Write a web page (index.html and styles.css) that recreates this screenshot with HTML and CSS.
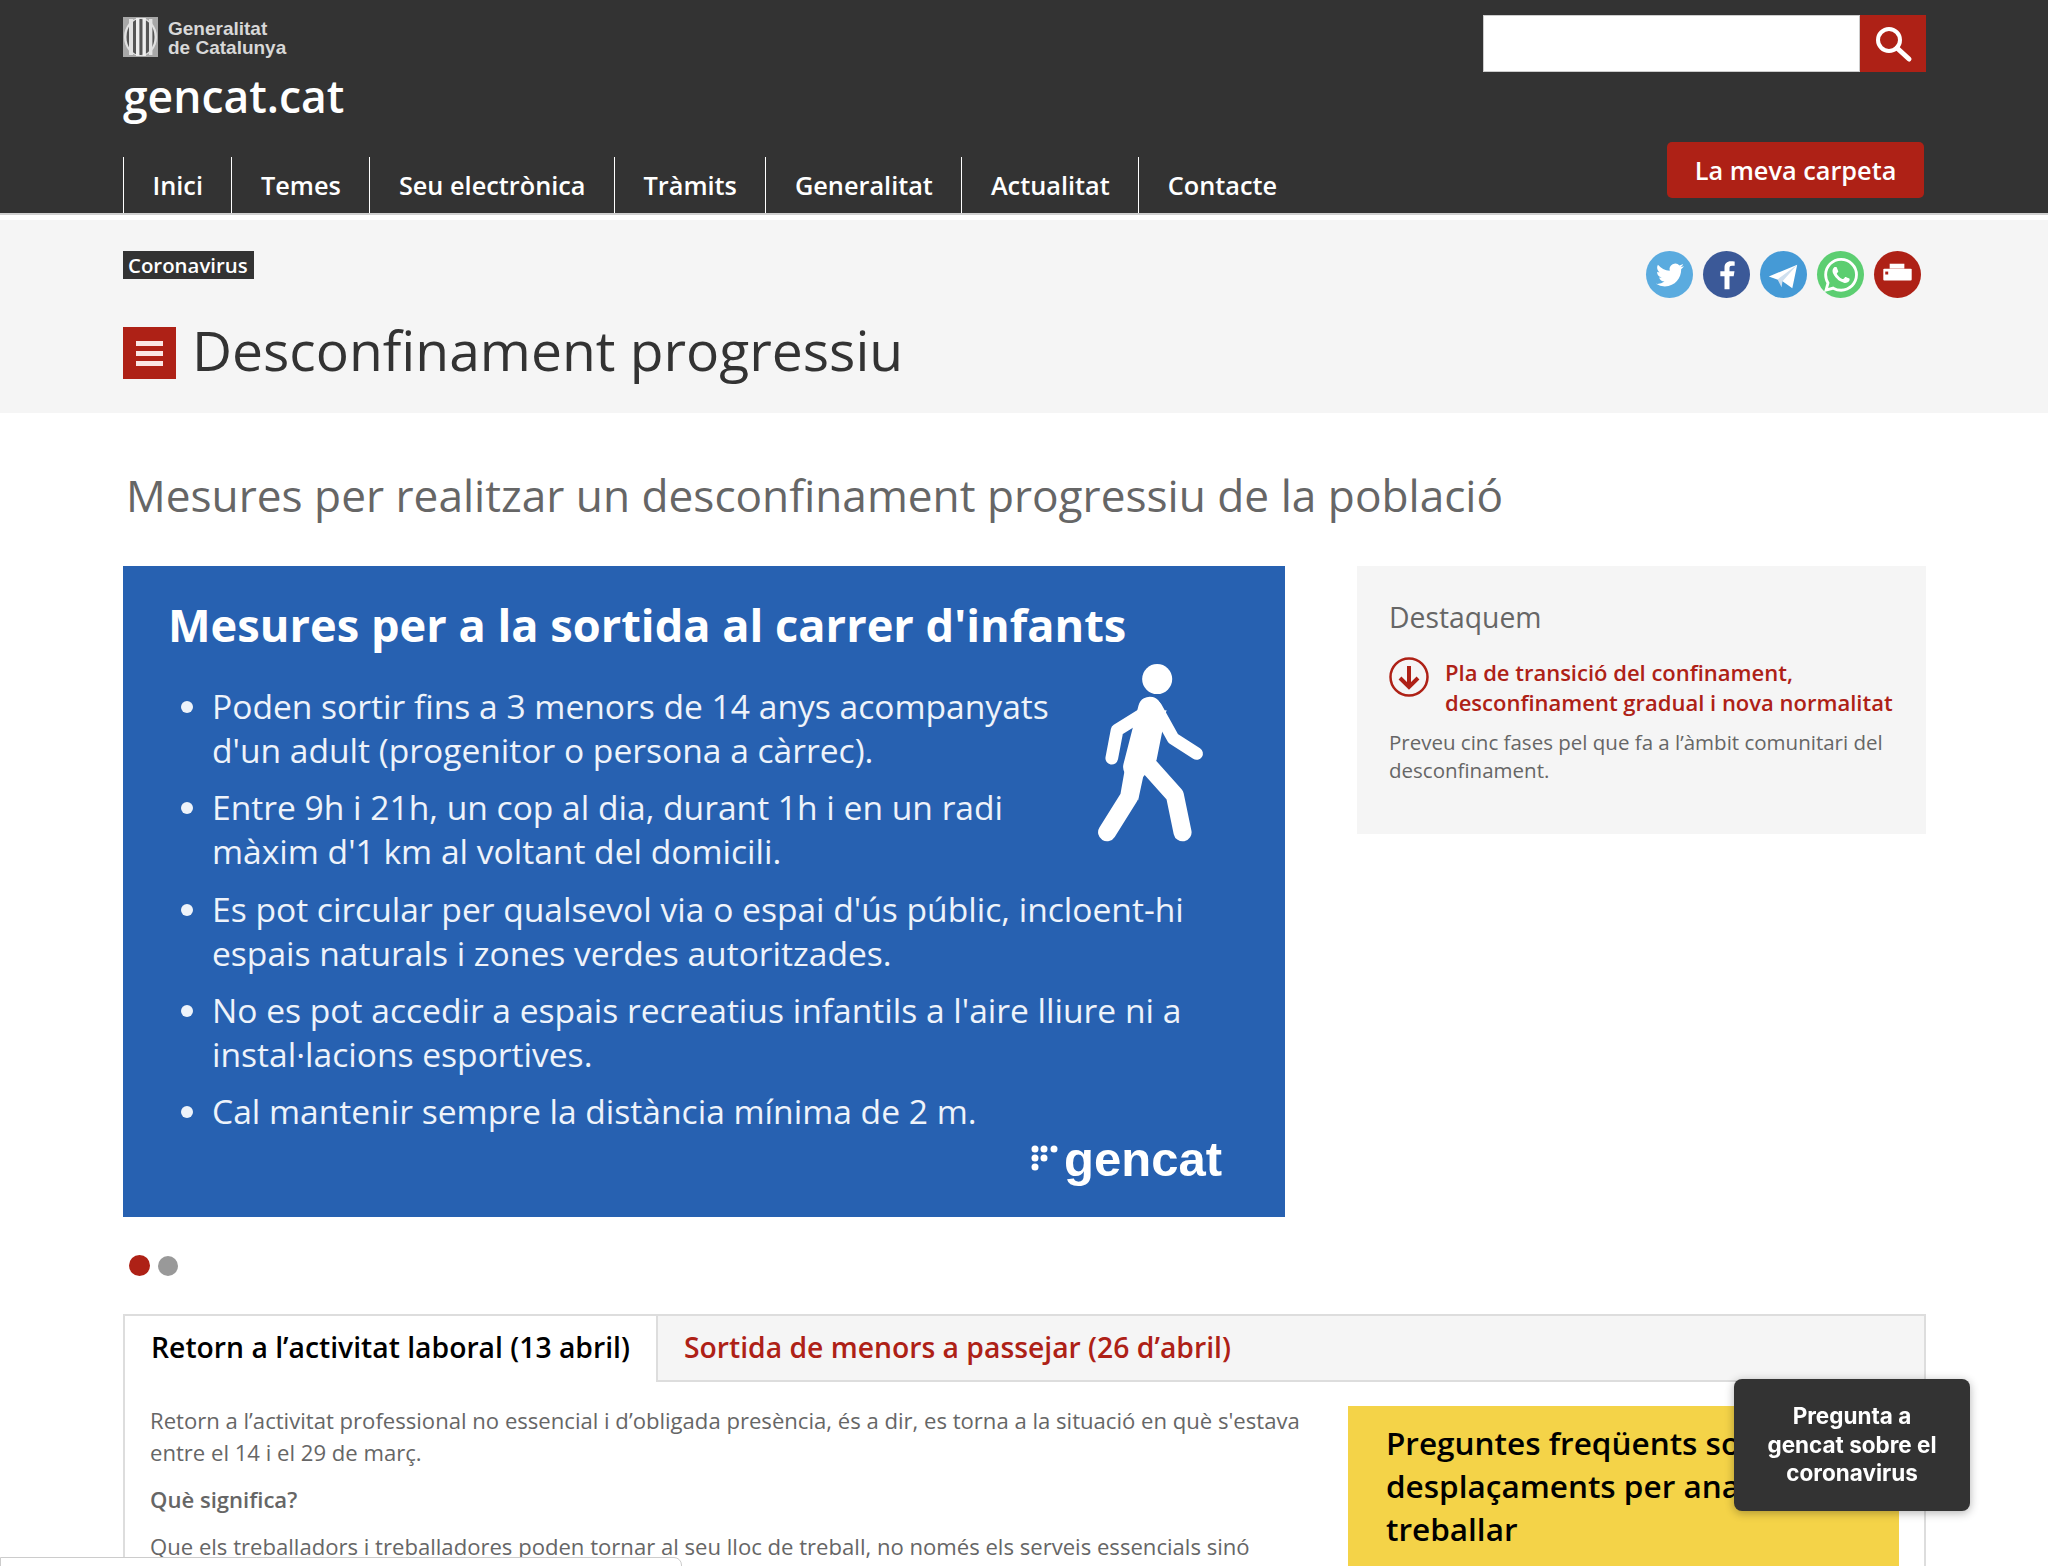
FILE: index.html
```html
<!DOCTYPE html>
<html lang="ca">

<head>
    <meta charset="UTF-8">
    <meta name="viewport" content="width=device-width, initial-scale=1.0">
    <title>Desconfinament progressiu</title>
    <link rel="stylesheet" href="styles.css">
</head>

<body>
    <div class="page">
        <header class="site-header">
            <div class="header-left">
                <div class="brand">
                    <svg class="brand-logo" viewBox="0 0 35 40">
                        <rect width="35" height="40" fill="#a8a8a8"/>
                        <ellipse cx="17.5" cy="20" rx="16.5" ry="19" fill="#e2e2e2"/>
                        <ellipse cx="17.5" cy="20" rx="14" ry="18" fill="#555"/>
                        <rect x="6" y="2" width="4" height="36" fill="#e2e2e2"/>
                        <rect x="13" y="1" width="3.4" height="38" fill="#eee"/>
                        <rect x="19.5" y="1" width="3.4" height="38" fill="#eee"/>
                        <rect x="26" y="2" width="3.4" height="36" fill="#e2e2e2"/>
                    </svg>
                    <div class="brand-name">Generalitat<br>de Catalunya</div>
                </div>
                <div class="site-name">gencat.cat</div>
                <nav class="main-nav">
                    <a href="#">Inici</a>
                    <a href="#">Temes</a>
                    <a href="#">Seu electrònica</a>
                    <a href="#">Tràmits</a>
                    <a href="#">Generalitat</a>
                    <a href="#">Actualitat</a>
                    <a href="#">Contacte</a>
                </nav>
            </div>
            <div class="header-right">
                <form class="search">
                    <input type="text" class="search-input">
                    <button type="button" class="search-button">
                        <svg viewBox="0 0 40 40" width="40" height="40">
                            <circle cx="16" cy="16" r="11" fill="none" stroke="#fff" stroke-width="4"/>
                            <path d="M24 24 L36 35" stroke="#fff" stroke-width="5" stroke-linecap="round"/>
                        </svg>
                    </button>
                </form>
                <a href="#" class="folder-button">La meva carpeta</a>
            </div>
        </header>

        <section class="title-band">
            <div class="title-left">
                <span class="tag">Coronavirus</span>
                <div class="title-row">
                    <span class="menu-icon"><i></i><i></i><i></i></span>
                    <h1>Desconfinament progressiu</h1>
                </div>
            </div>
            <div class="share">
                <a href="#" class="share-icon twitter">
                    <svg viewBox="0 0 24 24" width="28" height="28"><path fill="#fff" d="M23.953 4.57a10 10 0 01-2.825.775 4.958 4.958 0 002.163-2.723c-.951.555-2.005.959-3.127 1.184a4.92 4.92 0 00-8.384 4.482C7.69 8.095 4.067 6.13 1.64 3.162a4.822 4.822 0 00-.666 2.475c0 1.71.87 3.213 2.188 4.096a4.904 4.904 0 01-2.228-.616v.06a4.923 4.923 0 003.946 4.827 4.996 4.996 0 01-2.212.085 4.936 4.936 0 004.604 3.417 9.867 9.867 0 01-6.102 2.105c-.39 0-.779-.023-1.17-.067a13.995 13.995 0 007.557 2.209c9.053 0 13.998-7.496 13.998-13.985 0-.21 0-.42-.015-.63A9.935 9.935 0 0024 4.59z"/></svg>
                </a>
                <a href="#" class="share-icon facebook">
                    <svg viewBox="0 0 48 48" width="40" height="40"><path fill="#fff" d="M27 41V25.5h5l1-6h-6v-3.500c0-2 .7-3 3-3h3.200V7.800c-1-.1-2.700-.3-4.700-.3-4.500 0-7.500 2.700-7.500 7.500v4.500h-5v6h5V41z"/></svg>
                </a>
                <a href="#" class="share-icon telegram">
                    <svg viewBox="0 0 48 48" width="47" height="47">
                        <path fill="#fff" d="M9 26 L38 14 L33 38 L23 31 Z"/>
                        <path fill="#cfe0ef" d="M18 29 L38 14 L23 31 L22 37 Z"/>
                    </svg>
                </a>
                <a href="#" class="share-icon whatsapp">
                    <svg viewBox="0 0 24 24" width="34" height="34"><path fill="#fff" d="M17.472 14.382c-.297-.149-1.758-.867-2.03-.967-.273-.099-.471-.148-.67.15-.197.297-.767.966-.94 1.164-.173.199-.347.223-.644.075-.297-.15-1.255-.463-2.39-1.475-.883-.788-1.48-1.761-1.653-2.059-.173-.297-.018-.458.13-.606.134-.133.298-.347.446-.52.149-.174.198-.298.298-.497.099-.198.05-.371-.025-.52-.075-.149-.669-1.612-.916-2.207-.242-.579-.487-.5-.669-.51-.173-.008-.371-.01-.57-.01-.198 0-.52.074-.792.372-.272.297-1.04 1.016-1.04 2.479 0 1.462 1.065 2.875 1.213 3.074.149.198 2.096 3.2 5.077 4.487.709.306 1.262.489 1.694.625.712.227 1.36.195 1.871.118.571-.085 1.758-.719 2.006-1.413.248-.694.248-1.289.173-1.413-.074-.124-.272-.198-.57-.347m-5.421 7.403h-.004a9.87 9.87 0 01-5.031-1.378l-.361-.214-3.741.982.998-3.648-.235-.374a9.86 9.86 0 01-1.51-5.26c.001-5.45 4.436-9.884 9.888-9.884 2.64 0 5.122 1.03 6.988 2.898a9.825 9.825 0 012.893 6.994c-.003 5.45-4.437 9.884-9.885 9.884m8.413-18.297A11.815 11.815 0 0012.05 0C5.495 0 .16 5.335.157 11.892c0 2.096.547 4.142 1.588 5.945L.057 24l6.305-1.654a11.882 11.882 0 005.683 1.448h.005c6.554 0 11.89-5.335 11.893-11.893a11.821 11.821 0 00-3.48-8.413z"/></svg>
                </a>
                <a href="#" class="share-icon print">
                    <svg viewBox="0 0 48 48" width="47" height="47">
                        <rect x="16" y="13" width="15" height="5" fill="#fff"/>
                        <rect x="9.500" y="18" width="29" height="12" rx="1" fill="#fff"/>
                        <rect x="11.500" y="21" width="3" height="3" fill="#ae2116"/>
                    </svg>
                </a>
            </div>
        </section>

        <main class="content">
            <h2 class="page-lead">Mesures per realitzar un desconfinament progressiu de la població</h2>

            <div class="intro">
                <div class="hero">
                    <h3>Mesures per a la sortida al carrer d'infants</h3>
                    <ul>
                        <li>Poden sortir fins a 3 menors de 14 anys acompanyats<br>d'un adult (progenitor o persona a càrrec).</li>
                        <li>Entre 9h i 21h, un cop al dia, durant 1h i en un radi<br>màxim d'1 km al voltant del domicili.</li>
                        <li>Es pot circular per qualsevol via o espai d'ús públic, incloent-hi<br>espais naturals i zones verdes autoritzades.</li>
                        <li>No es pot accedir a espais recreatius infantils a l'aire lliure ni a<br>instal<span class="middot">·</span>lacions esportives.</li>
                        <li>Cal mantenir sempre la distància mínima de 2 m.</li>
                    </ul>
                    <svg class="walker" viewBox="280 120 350 560">
                        <circle cx="472" cy="177" r="45" fill="#fff"/>
                        <path d="M452 268 L352 330 L336 414" fill="none" stroke="#fff" stroke-width="38" stroke-linecap="round" stroke-linejoin="round"/>
                        <path d="M468 262 L520 355 L590 400" fill="none" stroke="#fff" stroke-width="38" stroke-linecap="round" stroke-linejoin="round"/>
                        <path d="M405 300 L500 270 L470 420 L430 470 L415 540 L375 500 Z" fill="#fff"/>
                        <path d="M450 265 L405 440" fill="none" stroke="#fff" stroke-width="70" stroke-linecap="round"/>
                        <path d="M402 450 L388 530 L322 636" fill="none" stroke="#fff" stroke-width="54" stroke-linecap="round" stroke-linejoin="round"/>
                        <path d="M440 430 L525 525 L548 636" fill="none" stroke="#fff" stroke-width="54" stroke-linecap="round" stroke-linejoin="round"/>
                    </svg>
                    <div class="hero-logo">
                        <svg viewBox="0 0 30 30" width="30" height="30">
                            <g fill="#fff">
                                <circle cx="4" cy="5" r="3.500"/><circle cx="13" cy="5" r="3.500"/><circle cx="23" cy="5" r="3.500"/>
                                <circle cx="4" cy="14" r="3.500"/><circle cx="13" cy="14" r="3.500"/>
                                <circle cx="4" cy="23" r="3.500"/>
                            </g>
                        </svg>
                        <span>gencat</span>
                    </div>
                </div>
                <aside class="highlight">
                    <h4>Destaquem</h4>
                    <a href="#" class="highlight-link">
                        <svg viewBox="0 0 40 40" width="40" height="40">
                            <circle cx="20" cy="20" r="18.500" fill="none" stroke="#ae2116" stroke-width="2.500"/>
                            <path d="M20 9 V29 M11 21 L20 30 L29 21" fill="none" stroke="#ae2116" stroke-width="4"/>
                        </svg>
                        <span>Pla de transició del confinament,<br>desconfinament gradual i nova normalitat</span>
                    </a>
                    <p>Preveu cinc fases pel que fa a l’àmbit comunitari del desconfinament.</p>
                </aside>
            </div>

            <div class="carousel-dots">
                <span class="dot dot-active"></span>
                <span class="dot"></span>
            </div>

            <div class="tabs">
                <div class="tab-bar">
                    <a href="#" class="tab tab-active">Retorn a l’activitat laboral (13 abril)</a>
                    <a href="#" class="tab">Sortida de menors a passejar (26 d’abril)</a>
                </div>
                <div class="tab-body">
                    <div class="tab-text">
                        <p>Retorn a l’activitat professional no essencial i d’obligada presència, és a dir, es torna a la situació en què s'estava entre el 14 i el 29 de març.</p>
                        <p><strong>Què significa?</strong></p>
                        <p>Que els treballadors i treballadores poden tornar al seu lloc de treball, no només els serveis essencials sinó</p>
                    </div>
                    <div class="faq-box">Preguntes freqüents sobre els<br>desplaçaments per anar a<br>treballar</div>
                </div>
            </div>
        </main>

        <div class="chat-tip">Pregunta a<br>gencat sobre el<br>coronavirus</div>
        <div class="bottom-sheet"></div>
    </div>
</body>

</html>
```

FILE: styles.css
```css
html,
body {
    margin: 0;
    padding: 0;
    background-color: #ffffff;
}

body {
    font-family: "Open Sans", sans-serif;
    color: #666666;
}

.page {
    height: 100vh;
    overflow: hidden;
}

a {
    text-decoration: none;
}

/* top bar */
.site-header {
    display: flex;
    justify-content: space-between;
    height: 213px;
    padding: 0 122px 0 123px;
    background-color: #333333;
    border-bottom: 2px solid #d0d0d0;
}

.header-left {
    display: flex;
    flex-direction: column;
}

.brand {
    display: flex;
    align-items: center;
    gap: 10px;
    margin-top: 17px;
}

.brand-logo {
    width: 35px;
    height: 40px;
}

.brand-name {
    padding-top: 1px;
    font-family: "Liberation Sans", Arial, sans-serif;
    font-size: 19px;
    font-weight: 700;
    line-height: 19px;
    color: #d8d8d8;
}

.site-name {
    margin-top: 8px;
    font-size: 44.4px;
    font-weight: 600;
    line-height: 62px;
    color: #ffffff;
}

.main-nav {
    display: flex;
    margin-top: auto;
}

.main-nav a {
    display: block;
    height: 56px;
    padding: 0 28.5px;
    border-left: 1px solid #ffffff;
    font-size: 25.3px;
    font-weight: 600;
    line-height: 56px;
    color: #ffffff;
}

.header-right {
    display: flex;
    flex-direction: column;
    align-items: flex-end;
}

.search {
    display: flex;
    height: 57px;
    margin-top: 15px;
}

.search-input {
    box-sizing: border-box;
    width: 377px;
    height: 57px;
    margin: 0;
    border: 1px solid #cccccc;
    background-color: #ffffff;
}

.search-button {
    display: flex;
    align-items: center;
    justify-content: center;
    width: 66px;
    height: 57px;
    padding: 0;
    border: none;
    background-color: #ae2116;
}

.folder-button {
    box-sizing: border-box;
    width: 257px;
    height: 56px;
    margin-top: 70px;
    margin-right: 2px;
    border-radius: 5px;
    background-color: #ae2116;
    font-size: 25.3px;
    font-weight: 600;
    line-height: 56px;
    text-align: center;
    color: #ffffff;
}

/* grey band with the page title */
.title-band {
    display: flex;
    justify-content: space-between;
    height: 193px;
    margin-top: 5px;
    padding: 0 127px 0 123px;
    background-color: #f5f5f5;
}

.tag {
    display: inline-block;
    height: 28px;
    margin-top: 31px;
    padding: 0 6px 0 5px;
    background-color: #333333;
    font-size: 20.4px;
    font-weight: 600;
    line-height: 28px;
    color: #ffffff;
}

.title-row {
    display: flex;
    align-items: center;
    gap: 16px;
    margin-top: 48px;
}

.menu-icon {
    display: flex;
    flex-direction: column;
    justify-content: center;
    align-items: center;
    gap: 5px;
    width: 53px;
    height: 52px;
    background-color: #ae2116;
}

.menu-icon i {
    display: block;
    width: 27px;
    height: 5px;
    background-color: #fbe6e4;
}

.title-row h1 {
    margin: -6px 0 0;
    font-size: 55.2px;
    font-weight: 400;
    line-height: 52px;
    color: #333333;
}

.share {
    display: flex;
    gap: 10px;
    margin-top: 31px;
}

.share-icon {
    display: flex;
    align-items: center;
    justify-content: center;
    width: 47px;
    height: 47px;
    border-radius: 50%;
}

.twitter {
    background-color: #5aabdf;
}

.facebook {
    background-color: #3b5998;
}

.telegram {
    background-color: #459ad6;
}

.whatsapp {
    background-color: #5cce71;
}

.print {
    background-color: #ae2116;
}

/* main content */
.content {
    padding: 0 122px 0 123px;
}

.page-lead {
    margin: 52px 0 41px 3px;
    font-size: 44.2px;
    font-weight: 400;
    line-height: 60px;
    color: #666666;
}

.intro {
    display: flex;
    justify-content: space-between;
    align-items: flex-start;
}

.hero {
    position: relative;
    box-sizing: border-box;
    width: 1162px;
    height: 651px;
    padding: 29px 0 0 45px;
    background-color: #2761b1;
    color: #eef3fa;
    font-variant-ligatures: none;
}

.hero h3 {
    margin: 0 0 29px;
    font-size: 45.2px;
    font-weight: 700;
    line-height: 60px;
    color: #ffffff;
}

.hero ul {
    margin: 0;
    padding: 0 0 0 44px;
}

.hero li {
    margin-bottom: 13.25px;
    font-size: 33.6px;
    line-height: 44px;
}

.middot {
    display: inline-block;
}

.walker {
    position: absolute;
    top: 94px;
    left: 970px;
    width: 117px;
    height: 187px;
}

.hero-logo {
    position: absolute;
    right: 63px;
    bottom: 28px;
    display: flex;
    align-items: center;
    gap: 3px;
    font-family: "Liberation Sans", Arial, sans-serif;
    font-size: 49px;
    font-weight: 700;
    line-height: 60px;
    color: #ffffff;
}

.highlight {
    box-sizing: border-box;
    width: 569px;
    height: 268px;
    padding: 31px 32px 0;
    background-color: #f5f5f5;
}

.highlight h4 {
    margin: 0 0 20px;
    font-size: 28.3px;
    font-weight: 400;
    line-height: 40px;
    color: #666666;
}

.highlight-link {
    display: flex;
    gap: 16px;
    font-size: 22px;
    font-weight: 600;
    line-height: 30px;
    color: #ae2116;
}

.highlight-link svg {
    flex-shrink: 0;
}

.highlight p {
    margin: 11px 0 0;
    font-size: 20.5px;
    line-height: 28px;
    color: #666666;
}

.carousel-dots {
    display: flex;
    align-items: center;
    gap: 8px;
    margin: 38px 0 38px 6px;
}

.dot {
    width: 20px;
    height: 20px;
    border-radius: 50%;
    background-color: #999999;
}

.dot-active {
    width: 21px;
    height: 21px;
    background-color: #ae2116;
}

.tabs {
    border: 2px solid #dddddd;
    border-bottom: none;
}

.tab-bar {
    display: flex;
    height: 66px;
    background-color: #f5f5f5;
}

.tab {
    padding: 0 26px;
    font-size: 28.3px;
    font-weight: 600;
    line-height: 62px;
    color: #ae2116;
}

.tab-active {
    background-color: #ffffff;
    border-right: 2px solid #dddddd;
    color: #000000;
}

.tab-bar .tab:last-child {
    flex: 1;
    border-bottom: 2px solid #dddddd;
}

.tab-body {
    display: flex;
    justify-content: space-between;
    padding: 24px 25px 0 25px;
}

.tab-text {
    width: 1165px;
    margin-top: -2px;
}

.tab-text p {
    margin: 0 0 15px;
    font-size: 22.1px;
    line-height: 32px;
    color: #666666;
}

.tab-text strong {
    font-weight: 600;
}

.faq-box {
    box-sizing: border-box;
    width: 551px;
    height: 160px;
    padding: 15px 38px;
    background-color: #f4d348;
    font-size: 31.5px;
    font-weight: 600;
    line-height: 43px;
    white-space: nowrap;
    overflow: hidden;
    color: #000000;
}

/* things floating over the page */
.chat-tip {
    position: fixed;
    right: 78px;
    bottom: 55px;
    box-sizing: border-box;
    width: 236px;
    height: 132px;
    padding-top: 23px;
    border-radius: 8px;
    background-color: #333333;
    box-shadow: 0 2px 10px rgba(0, 0, 0, 0.3);
    font-family: Inter, sans-serif;
    font-size: 22.5px;
    font-weight: 700;
    line-height: 28.5px;
    text-align: center;
    color: #ffffff;
}

.bottom-sheet {
    position: fixed;
    left: 0;
    bottom: -8px;
    box-sizing: border-box;
    width: 682px;
    height: 17px;
    border: 1px solid #cccccc;
    border-top-right-radius: 8px;
    background-color: #ffffff;
}
```
